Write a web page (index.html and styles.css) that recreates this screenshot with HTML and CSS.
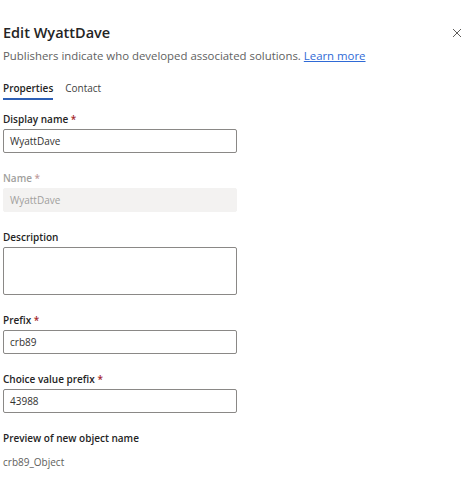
FILE: index.html
```html
<!DOCTYPE html>
<html lang="en">
<head>
<meta charset="utf-8">
<title>Edit WyattDave</title>
<link rel="stylesheet" href="styles.css">
</head>
<body>
<div class="panel">
  <header class="panel-header">
    <h1 class="title">Edit WyattDave</h1>
    <button class="close" aria-label="Close">
      <svg viewBox="0 0 10 10" width="10" height="10"><path d="M1 1 L9 9 M9 1 L1 9" stroke="#605e5c" stroke-width="1" fill="none"/></svg>
    </button>
  </header>
  <p class="subtitle">Publishers indicate who developed associated solutions. <a href="#" class="link">Learn more</a></p>

  <nav class="tabs">
    <span class="tab active">Properties</span>
    <span class="tab">Contact</span>
  </nav>

  <div class="field">
    <label class="label">Display name <span class="req">*</span></label>
    <div class="input">WyattDave</div>
  </div>
  <div class="field">
    <label class="label disabled">Name <span class="req">*</span></label>
    <div class="input input-disabled">WyattDave</div>
  </div>
  <div class="field">
    <label class="label">Description</label>
    <div class="input textarea"></div>
  </div>
  <div class="field">
    <label class="label">Prefix <span class="req">*</span></label>
    <div class="input">crb89</div>
  </div>
  <div class="field">
    <label class="label">Choice value prefix <span class="req">*</span></label>
    <div class="input">43988</div>
  </div>
  <div class="field">
    <div class="label">Preview of new object name</div>
    <div class="preview">crb89_Object</div>
  </div>
</div>
</body>
</html>
```

FILE: styles.css
```css
* { box-sizing: border-box; }
html, body { margin: 0; padding: 0; background: #fff; }
body {
  font-family: "Open Sans", "Noto Sans", "Liberation Sans", sans-serif;
  font-size: 10px;
  color: #323130;
}
.panel {
  padding: 23px 0 0 3px;
  width: 474px;
}
.panel-header {
  display: flex;
  align-items: center;
  justify-content: space-between;
  height: 20px;
}
.title {
  margin: 0;
  font-size: 14.5px;
  line-height: 20px;
  font-weight: 600;
  color: #242424;
}
.close {
  border: 0;
  background: none;
  padding: 0;
  margin-right: 12px;
  width: 10px;
  height: 10px;
  display: flex;
}
.subtitle {
  margin: 5px 0 0;
  line-height: 16px;
  font-size: 11.4px;
  color: #616161;
}
.link {
  color: #2f6ad6;
  text-decoration: underline;
}
.tabs {
  display: flex;
  gap: 12px;
  margin-top: 16px;
}
.tab {
  line-height: 16px;
  padding-bottom: 2px;
  color: #424242;
  border-bottom: 2px solid transparent;
}
.tab.active {
  font-weight: 600;
  color: #242424;
  border-bottom-color: #2d5fb5;
}
.field {
  display: flex;
  flex-direction: column;
  margin-top: 11px;
}
.field + .field { margin-top: 17px; }
.label {
  line-height: 16px;
  font-weight: 600;
  color: #242424;
  margin-bottom: 2px;
}
.label.disabled { color: #a19f9d; }
.req { color: #a4262c; font-weight: 600; }
.label.disabled .req { color: #c19c9c; }
.input {
  width: 234px;
  height: 24px;
  border: 1px solid #8a8886;
  border-radius: 2px;
  padding: 0 6px;
  line-height: 22px;
  color: #323130;
}
.input-disabled {
  border-color: #f3f2f1;
  background: #f3f2f1;
  color: #a19f9d;
}
.textarea { height: 48px; }
.field:last-child .label { margin-bottom: 8px; }
.preview {
  line-height: 16px;
  color: #605e5c;
}
```
